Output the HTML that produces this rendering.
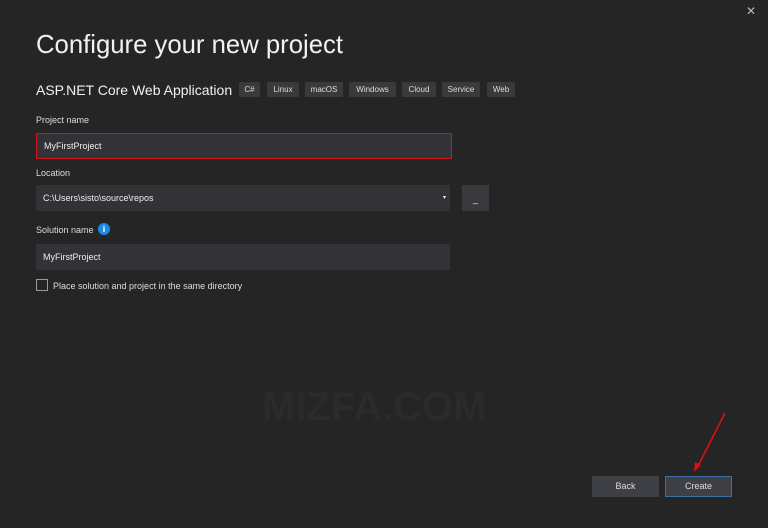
<!DOCTYPE html>
<html><head><style>
body{margin:0;width:768px;height:528px;background:#252526;font-family:"Liberation Sans",sans-serif;color:#f1f1f1;position:relative;overflow:hidden}
.a{position:absolute}
.tag{position:absolute;top:82px;height:15px;background:#3a3a3c;font-size:8px;line-height:15px;text-align:center;color:#ddd;border-radius:1px}
.lbl{position:absolute;font-size:9px;color:#ddd}
.inp{position:absolute;left:36px;width:414px;background:#333337;font-size:9px;color:#eee;box-sizing:border-box;padding-left:7px}
.btn{position:absolute;top:476px;height:21px;background:#3f3f46;font-size:9px;line-height:21px;text-align:center;color:#ddd}
</style></head><body>
<div class="a" style="left:746px;top:4px;font-size:12px;color:#bbb">✕</div>
<div class="a" style="left:36px;top:31px;font-size:25.7px;color:#f1f1f1">Configure your new project</div>
<div class="a" style="left:36px;top:82px;font-size:14px">ASP.NET Core Web Application</div>
<div class="tag" style="left:239px;width:21px">C#</div>
<div class="tag" style="left:267px;width:32px">Linux</div>
<div class="tag" style="left:305px;width:38px">macOS</div>
<div class="tag" style="left:349px;width:47px">Windows</div>
<div class="tag" style="left:402px;width:34px">Cloud</div>
<div class="tag" style="left:442px;width:38px">Service</div>
<div class="tag" style="left:487px;width:28px">Web</div>
<div class="lbl" style="left:36px;top:115px">Project name</div>
<div class="inp" style="top:133px;height:26px;line-height:24px;border:1px solid #d0141c;width:416px">MyFirstProject</div>
<div class="lbl" style="left:36px;top:168px">Location</div>
<div class="inp" style="top:185px;height:26px;line-height:26px">C:\Users\sisto\source\repos<span style="position:absolute;right:4px;font-size:6px">▾</span></div>
<div class="a" style="left:462px;top:185px;width:27px;height:26px;background:#3a3a3e;text-align:center;font-size:9px;line-height:28px">_</div>
<div class="lbl" style="left:36px;top:225px">Solution name</div>
<div class="a" style="left:98px;top:223px;width:12px;height:12px;border-radius:50%;background:#1e88e5;color:#fff;font-size:9px;line-height:12px;text-align:center;font-weight:bold">i</div>
<div class="inp" style="top:244px;height:26px;line-height:26px">MyFirstProject</div>
<div class="a" style="left:36px;top:279px;width:10px;height:10px;border:1px solid #999"></div>
<div class="lbl" style="left:53px;top:281px">Place solution and project in the same directory</div>
<div class="a" style="left:262px;top:385px;font-size:40px;font-weight:bold;color:#2b2b2c">MIZFA.COM</div>
<div class="btn" style="left:592px;width:67px">Back</div>
<div class="btn" style="left:665px;width:67px;border:1px solid #3b6fa8;box-sizing:border-box;height:21px;line-height:19px">Create</div>
<svg class="a" style="left:0;top:0" width="768" height="528"><line x1="725" y1="413" x2="697" y2="468" stroke="#e01010" stroke-width="1.5"/><polygon points="694,472 695,462 701,465" fill="#e01010"/></svg>
</body></html>
